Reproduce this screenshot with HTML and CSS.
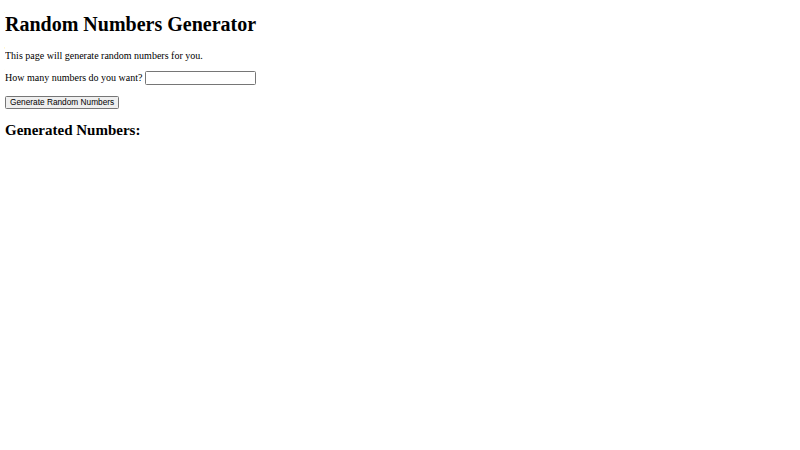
FILE: index.html
```html
<!DOCTYPE html>
<html>
<head>
<meta charset="utf-8">
<title>Random Numbers Generator</title>
<link rel="stylesheet" href="styles.css">
</head>
<body>
<h1 class="title">Random Numbers Generator</h1>
<p class="text">This page will generate random numbers for you.</p>
<p class="text field">
  <label for="count">How many numbers do you want?</label>
  <input id="count" class="count" type="text">
</p>
<p class="text action">
  <button class="btn" type="button">Generate Random Numbers</button>
</p>
<h2 class="subtitle">Generated Numbers:</h2>
<div class="results"></div>
</body>
</html>
```
FILE: styles.css
```css
html {
  background: #ffffff;
}
body {
  margin: 5px;
  font-family: "Liberation Serif", "Times New Roman", serif;
  font-size: 10px;
  color: #000000;
}
.title {
  font-size: 20px;
  font-weight: bold;
  margin: 8.4px 0 13.4px;
  line-height: 23px;
}
.text {
  margin: 10px 0;
  line-height: 11.5px;
}
.field {
  display: flex;
  align-items: center;
  gap: 3px;
}
.action {
  margin-top: 11px;
}
.count {
  box-sizing: border-box;
  width: 111px;
  height: 13.5px;
  margin: 0;
  padding: 1px 2px;
  border: 1px solid #767676;
  border-radius: 1.5px;
  font-size: 8.3px;
  font-family: "Liberation Sans", Arial, sans-serif;
  background: #ffffff;
}
.btn {
  box-sizing: border-box;
  height: 13.5px;
  margin: 0;
  padding: 0 4px;
  font-family: "Liberation Sans", Arial, sans-serif;
  font-size: 8.3px;
  line-height: 1;
  color: #000000;
  background: #efefef;
  border: 1px solid #767676;
  border-radius: 1.5px;
  display: block;
}
.subtitle {
  font-size: 15px;
  font-weight: bold;
  margin: 12.45px 0;
  line-height: 17.25px;
}
```
